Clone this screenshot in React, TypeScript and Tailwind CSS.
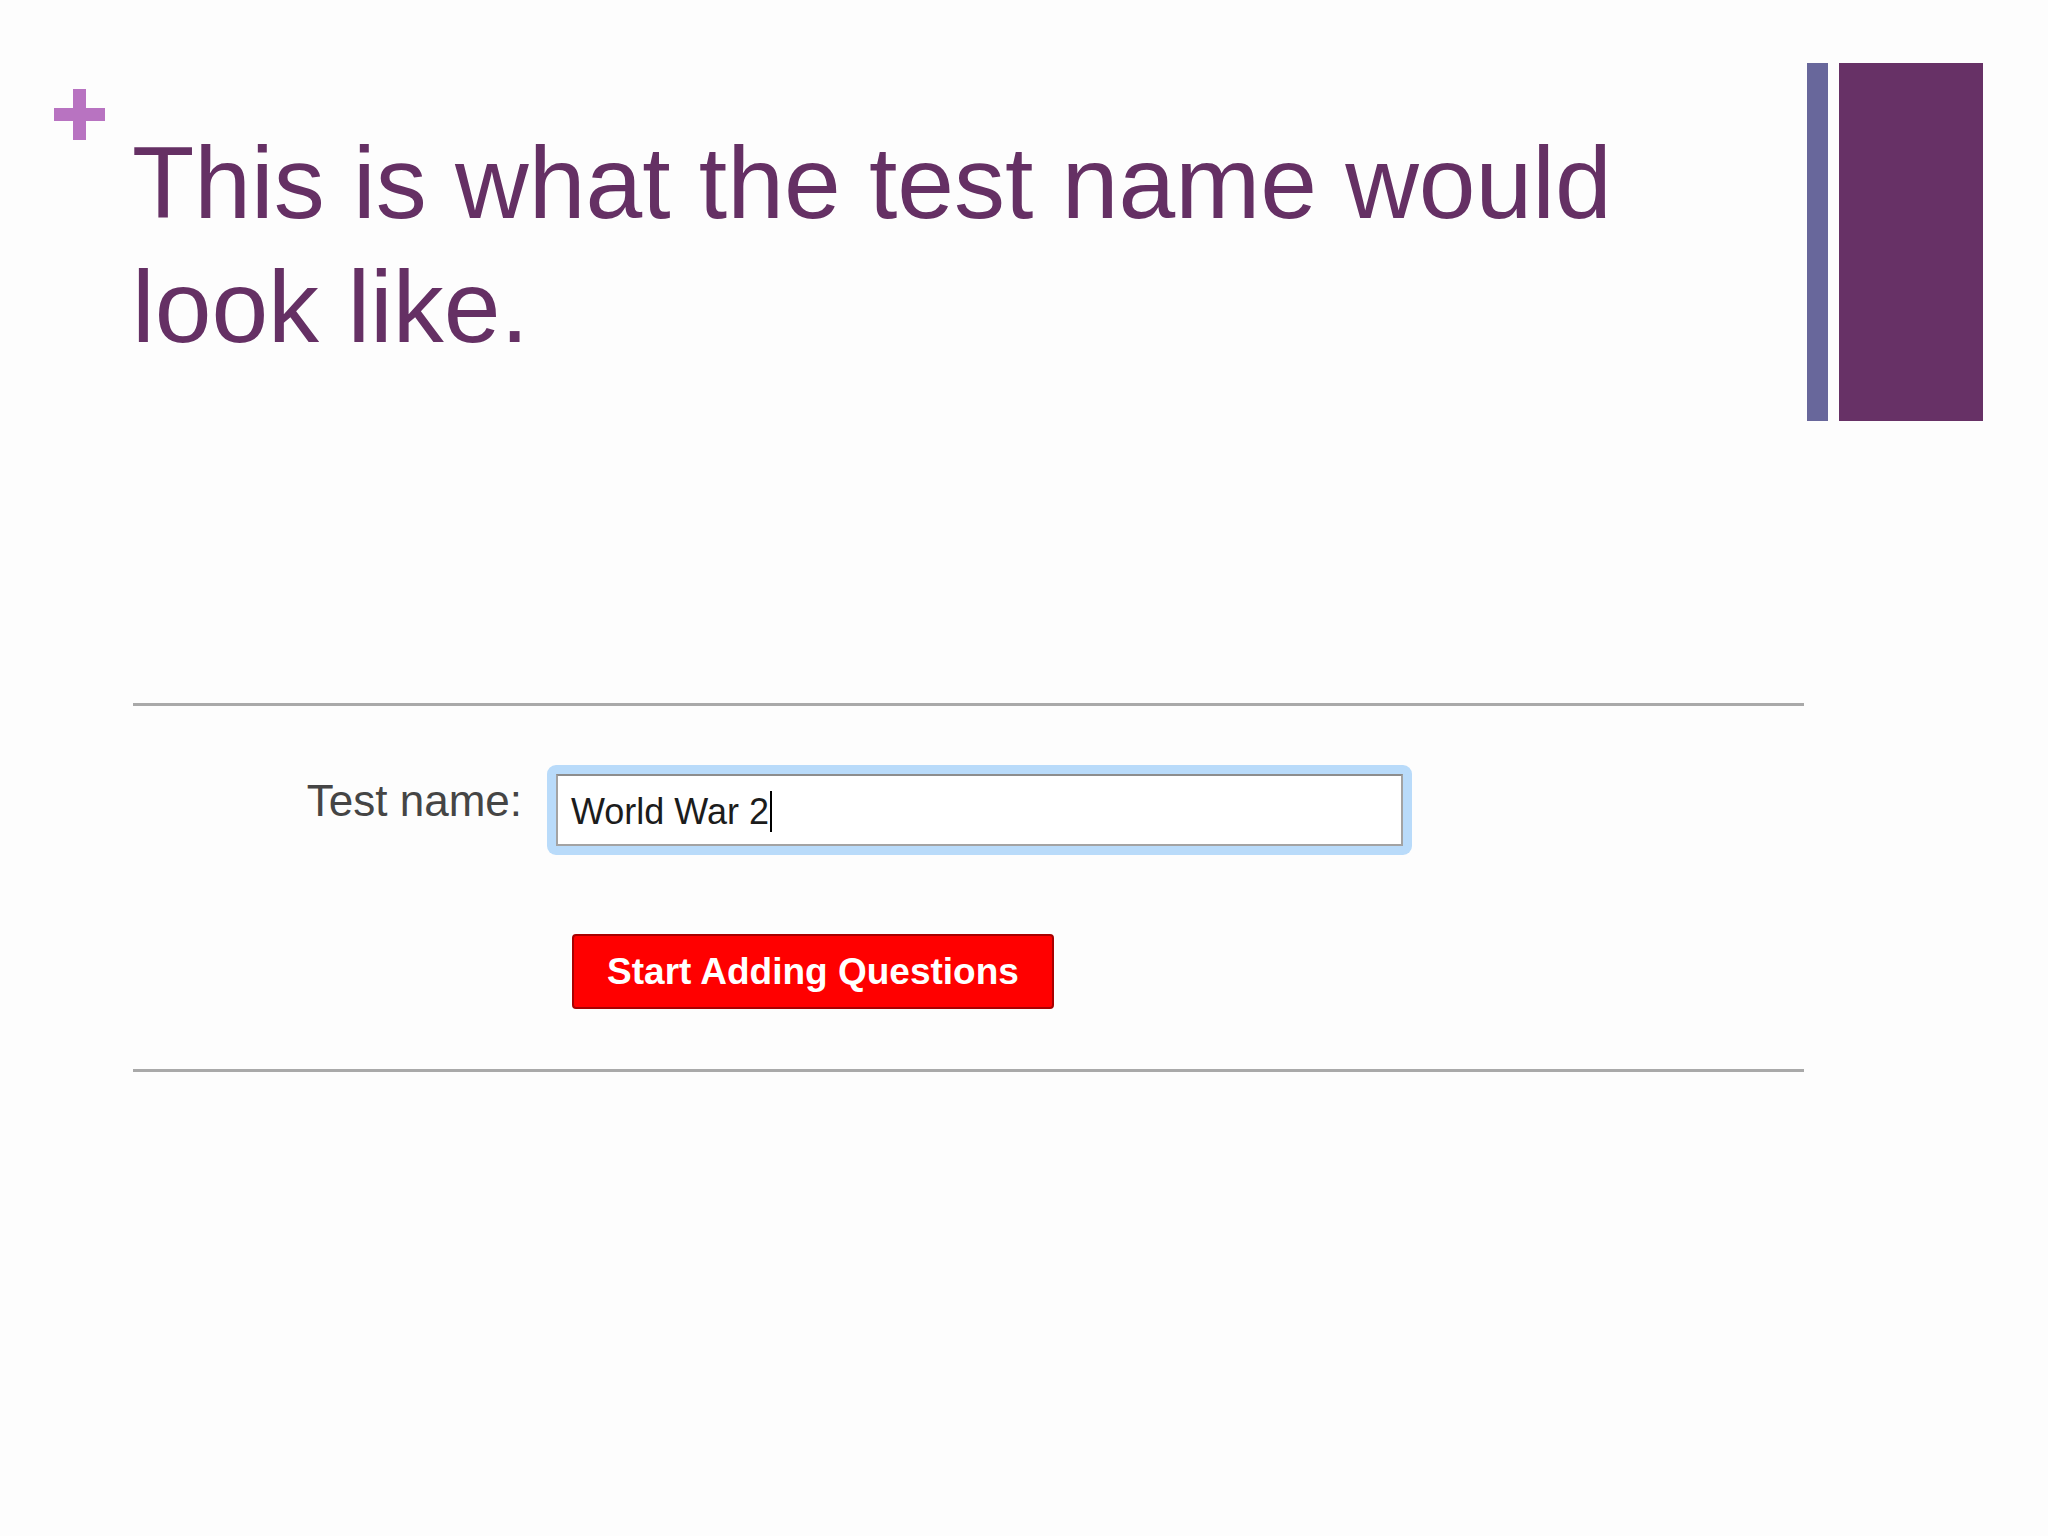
import React from "react";

export default function App() {
  return (
    <div
      className="w-[2048px] h-[1536px] bg-[#fdfdfd] flex flex-col overflow-hidden"
      style={{ fontFamily: '"Liberation Sans", Arial, sans-serif' }}
    >
      {/* Header */}
      <div className="flex items-start pt-[63px] pr-[65px]">
        <div className="ml-[54px] mt-[26px] relative w-[51px] h-[51px] shrink-0">
          <div className="absolute left-0 top-[19px] w-[51px] h-[13px] bg-[#b873c1]" />
          <div className="absolute left-[19px] top-0 w-[13px] h-[51px] bg-[#b873c1]" />
        </div>
        <h1 className="ml-[27px] mt-[58px] w-[1640px] text-[102px] leading-[124px] text-[#653064] font-normal">
          This is what the test name would look like.
        </h1>
        <div className="ml-auto flex gap-[11px] shrink-0">
          <div className="w-[21px] h-[358px] bg-[#68679b]" />
          <div className="w-[144px] h-[358px] bg-[#673166]" />
        </div>
      </div>

      {/* Top rule */}
      <div className="mt-[282px] ml-[133px] w-[1671px] h-[3px] bg-[#a9a9a9]" />

      {/* Form */}
      <div className="mt-[59px] grid grid-cols-[522px_1fr]">
        <div className="pt-[12px] text-right text-[44px] leading-[48px] text-[#454545]">
          Test name:
        </div>
        <div className="pl-[25px] flex flex-col items-start">
          <div className="w-[865px] p-[9px] rounded-[9px] bg-[#b9dbfa]">
            <div className="h-[72px] bg-white border-2 border-[#a3a3a3] border-t-[#8d8d8d] flex items-center pl-[13px] pt-[3px]">
              <span className="text-[36px] text-[#1c1c1c] whitespace-pre">World War 2</span>
              <span className="ml-[1px] w-[2px] h-[41px] bg-black" />
            </div>
          </div>
          <button className="mt-[79px] ml-[25px] w-[482px] h-[75px] bg-[#ff0000] border-2 border-[#a80000] rounded-[4px] text-white font-bold text-[37px] flex items-center justify-center">
            Start Adding Questions
          </button>
        </div>
      </div>

      {/* Bottom rule */}
      <div className="mt-[60px] ml-[133px] w-[1671px] h-[3px] bg-[#a9a9a9]" />
    </div>
  );
}
